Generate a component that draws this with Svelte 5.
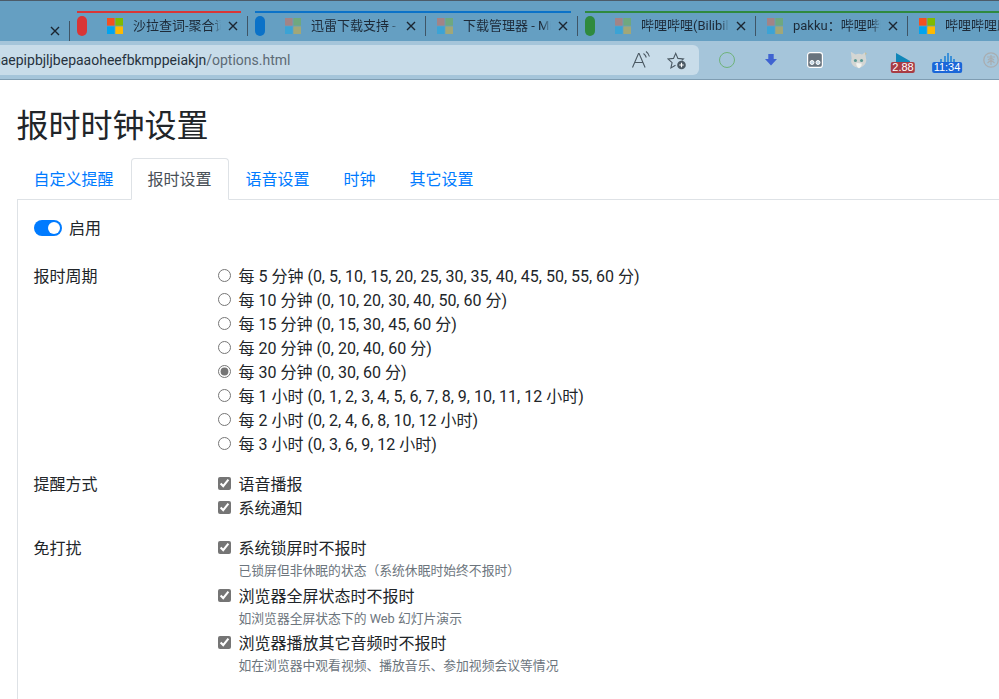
<script lang="ts">
	interface Tab {
		title: string;
		logo: 'bright' | 'faded';
	}
	interface Group {
		color?: string;
		tabs: Tab[];
	}

	const groups: Group[] = [
		{ color: '#d93636', tabs: [{ title: '沙拉查词-聚合词典划词翻译', logo: 'bright' }] },
		{
			color: '#0b72c8',
			tabs: [
				{ title: '迅雷下载支持 - Microsoft Edge', logo: 'faded' },
				{ title: '下载管理器 - Microsoft Edge', logo: 'faded' }
			]
		},
		{
			color: '#2f8a3f',
			tabs: [
				{ title: '哔哩哔哩(Bilibili)', logo: 'faded' },
				{ title: 'pakku：哔哩哔哩弹幕', logo: 'faded' },
				{ title: '哔哩哔哩助手', logo: 'bright' }
			]
		}
	];

	const periods = [
		'每 5 分钟 (0, 5, 10, 15, 20, 25, 30, 35, 40, 45, 50, 55, 60 分)',
		'每 10 分钟 (0, 10, 20, 30, 40, 50, 60 分)',
		'每 15 分钟 (0, 15, 30, 45, 60 分)',
		'每 20 分钟 (0, 20, 40, 60 分)',
		'每 30 分钟 (0, 30, 60 分)',
		'每 1 小时 (0, 1, 2, 3, 4, 5, 6, 7, 8, 9, 10, 11, 12 小时)',
		'每 2 小时 (0, 2, 4, 6, 8, 10, 12 小时)',
		'每 3 小时 (0, 3, 6, 9, 12 小时)'
	];

	const quiet = [
		{ label: '系统锁屏时不报时', hint: '已锁屏但非休眠的状态（系统休眠时始终不报时）' },
		{ label: '浏览器全屏状态时不报时', hint: '如浏览器全屏状态下的 Web 幻灯片演示' },
		{ label: '浏览器播放其它音频时不报时', hint: '如在浏览器中观看视频、播放音乐、参加视频会议等情况' }
	];

	const navItems = ['自定义提醒', '报时设置', '语音设置', '时钟', '其它设置'];
	let activeNav = $state('报时设置');
	let period = $state(4);
</script>

{#snippet logo(kind: string)}
	<svg class="favicon" viewBox="0 0 16 16" aria-hidden="true">
		{#if kind === 'bright'}
			<rect width="7.6" height="7.6" fill="#f25022" />
			<rect x="8.4" width="7.6" height="7.6" fill="#7fba00" />
			<rect y="8.4" width="7.6" height="7.6" fill="#00a4ef" />
			<rect x="8.4" y="8.4" width="7.6" height="7.6" fill="#ffb900" />
		{:else}
			<rect width="7.6" height="7.6" fill="#a28487" />
			<rect x="8.4" width="7.6" height="7.6" fill="#6fa87f" />
			<rect y="8.4" width="7.6" height="7.6" fill="#3ba3d5" />
			<rect x="8.4" y="8.4" width="7.6" height="7.6" fill="#a1a778" />
		{/if}
	</svg>
{/snippet}

{#snippet tabItem(tab: Tab, grouped: boolean)}
	<div class="tab" class:grouped>
		{@render logo(tab.logo)}
		<span class="tab-title">{tab.title}</span>
		<svg class="close" viewBox="0 0 10 10" aria-hidden="true">
			<path d="M1 1l8 8M9 1l-8 8" />
		</svg>
	</div>
{/snippet}

<div class="browser">
	<div class="tabstrip">
		<div class="tab first">
			<svg class="close" viewBox="0 0 10 10" aria-hidden="true">
				<path d="M1 1l8 8M9 1l-8 8" />
			</svg>
		</div>
		{#each groups as group}
			<div class="group" style="--group: {group.color}">
				{#each group.tabs as tab, i}
					{#if i === 0}
						<span class="pill"></span>
					{/if}
					{@render tabItem(tab, i === 0)}
				{/each}
			</div>
		{/each}
	</div>

	<div class="toolbar">
		<div class="address">
			<span class="url">haepipbjljbepaaoheefbkmppeiakjn<span class="path">/options.html</span></span>
			<svg class="addr-icon" viewBox="0 0 20 20" aria-hidden="true">
				<path d="M1.500 17.500 7.500 3.500h.6l6 14M3.600 12.500h8.400" />
				<path d="M12.500 3.500c1.400 1 2.400 2.400 2.800 4M15 1.500c1.800 1.300 3 3 3.400 5" />
			</svg>
			<svg class="addr-icon star" viewBox="0 0 20 20" aria-hidden="true">
				<path d="M9.500 10.800 M8.500 15.300 3.900 18l1.200-5.400L1 8.900l5.500-.5L8.700 3.300l2.200 5.100 5.500.5-1.600 1.500" />
				<circle class="plus-bg" cx="14.500" cy="15" r="4.300" />
				<path class="plus" d="M14.500 12.800v4.400M12.300 15h4.400" />
			</svg>
		</div>
		<div class="extensions">
			<span class="ext ring"></span>
			<svg class="ext" viewBox="0 0 16 16" aria-hidden="true">
				<path d="M5.300 2h5.400v5H14l-6 6.400L2 7h3.300z" fill="#3f63d1" />
			</svg>
			<svg class="ext" viewBox="0 0 16 16" aria-hidden="true">
				<rect x=".6" y=".6" width="14.800" height="14.800" rx="2.500" fill="#68747e" stroke="#fff" stroke-width="1.200" />
				<circle cx="5" cy="10.500" r="2" fill="#c7dbe8" stroke="#fff" />
				<circle cx="11" cy="10.500" r="2" fill="#c7dbe8" stroke="#fff" />
			</svg>
			<svg class="ext cat" viewBox="0 0 18 18" aria-hidden="true">
				<path d="M1 1l4.500 2.500c2.500-.8 4.500-.8 6.500 0L15 1.500l.8 5.500c1 3.500-.5 6.500-3 8L9 17l-4-1.500C2 14 .5 11 1.800 7.500z" fill="#d4d6d3" />
				<path d="M15 1.500l1.500 1-1 2z" fill="#cdbd8a" />
				<path d="M9 17c-2-1-3-3-2.500-5l5 .5c.4 2-.5 3.500-2.500 4.500z" fill="#f4f4f0" />
				<circle cx="5.500" cy="9.500" r="1.500" fill="#5b9a96" />
				<circle cx="11.500" cy="9.500" r="1.500" fill="#5b9a96" />
			</svg>
			<div class="ext-badged">
				<svg class="badge-art" viewBox="0 0 16 10" aria-hidden="true">
					<path d="M1 0l14 8v2H1z" fill="#0f86b8" />
				</svg>
				<span class="badge red">2.88</span>
			</div>
			<div class="ext-badged">
				<svg class="badge-art" viewBox="0 0 16 10" aria-hidden="true">
					<path d="M1 6h2v4H1zM5 3h2v7H5zM8 0h2v10H8zM11 3h2v7h-2zM14 6h2v4h-2z" fill="#3b90d8" />
				</svg>
				<span class="badge blue">11:34</span>
			</div>
			<svg class="ext last" viewBox="0 0 16 16" aria-hidden="true">
				<circle cx="8" cy="8" r="7.200" fill="none" stroke="#a9adb0" stroke-width="1.300" />
				<path d="M4 5h8M8 3v10M5 8l3-2 3 2M4.500 11l3.500-3 3.500 3" fill="none" stroke="#a9adb0" stroke-width="1.200" />
			</svg>
		</div>
	</div>
</div>

<main class="page">
	<h1>报时时钟设置</h1>
	<ul class="nav">
		{#each navItems as item}
			<li>
				<button class="nav-link" class:active={item === activeNav} onclick={() => (activeNav = item)}>
					{item}
				</button>
			</li>
		{/each}
	</ul>

	<section class="panel">
		<label class="switch-row">
			<span class="switch"></span>
			<span class="line">启用</span>
		</label>

		<div class="row">
			<div class="line">报时周期</div>
			<div>
				{#each periods as text, i}
					<label class="choice">
						<input type="radio" name="period" value={i} bind:group={period} />
						<span class="line">{text}</span>
					</label>
				{/each}
			</div>
		</div>

		<div class="row">
			<div class="line">提醒方式</div>
			<div>
				<label class="choice"><input type="checkbox" checked /><span class="line">语音播报</span></label>
				<label class="choice"><input type="checkbox" checked /><span class="line">系统通知</span></label>
			</div>
		</div>

		<div class="row">
			<div class="line">免打扰</div>
			<div>
				{#each quiet as item}
					<label class="choice"><input type="checkbox" checked /><span class="line">{item.label}</span></label>
					<small class="hint">{item.hint}</small>
				{/each}
			</div>
		</div>
	</section>
</main>

<style>
	:global(body) {
		margin: 0;
		overflow: hidden;
		background: #fff;
		color: #212529;
		font-family: Roboto, 'Noto Sans CJK SC', sans-serif;
		font-size: 16px;
		line-height: 24px;
	}

	.browser {
		width: 999px;
		overflow: hidden;
		border-bottom: 1px solid #7f9db2;
	}

	.tabstrip {
		display: flex;
		height: 40px;
		border-top: 1px solid #4c5b68;
		background: #659fc2;
		font-size: 13px;
		color: #1d2a38;
	}

	.group {
		display: flex;
		align-items: center;
		position: relative;
		padding-left: 7px;
	}

	.group::before {
		content: '';
		position: absolute;
		top: 10px;
		left: 7px;
		right: 7px;
		height: 2px;
		background: var(--group);
	}

	.pill {
		flex: none;
		width: 10px;
		height: 20px;
		margin-top: 10px;
		border-radius: 5px;
		background: var(--group);
	}

	.tab {
		flex: none;
		box-sizing: border-box;
		display: flex;
		align-items: center;
		gap: 10px;
		width: 152px;
		height: 20px;
		margin-top: 10px;
		padding: 0 9px 0 11px;
		border-right: 1px solid #3f5566;
		white-space: nowrap;
	}

	.tab.grouped {
		width: 161px;
		padding-left: 20px;
	}

	.tab.first {
		width: 70px;
		margin-top: 20px;
		justify-content: flex-end;
	}

	.favicon {
		flex: none;
		width: 16px;
		height: 16px;
	}

	.tab-title {
		flex: 1;
		min-width: 0;
		overflow: hidden;
		-webkit-mask-image: linear-gradient(to right, #000 90%, transparent);
		mask-image: linear-gradient(to right, #000 90%, transparent);
	}

	.close {
		flex: none;
		width: 10px;
		height: 10px;
		margin-left: -3px;
		fill: none;
		stroke: #1b2530;
		stroke-width: 1.400;
	}

	.toolbar {
		display: flex;
		align-items: center;
		height: 38px;
		background: #a5c5da;
	}

	.address {
		flex: none;
		box-sizing: border-box;
		display: flex;
		align-items: center;
		gap: 16px;
		width: 699px;
		height: 30px;
		padding-right: 12px;
		overflow: hidden;
		border-radius: 0 6px 6px 0;
		background: #c8dce9;
		font-size: 14px;
	}

	.url {
		flex: 1;
		margin-left: -7px;
		white-space: nowrap;
		color: #26323d;
	}

	.path {
		color: #5c6a75;
	}

	.addr-icon {
		flex: none;
		width: 20px;
		height: 20px;
		fill: none;
		stroke: #4b5963;
		stroke-width: 1.100;
	}

	.plus-bg {
		fill: #4b5963;
		stroke: none;
	}

	.plus {
		stroke: #fff;
		stroke-width: 1.200;
	}

	.extensions {
		display: flex;
		align-items: center;
		gap: 28px;
		margin-left: 20px;
	}

	.ext {
		flex: none;
		width: 16px;
		height: 16px;
	}

	.cat {
		transform: scale(1.150);
	}

	.ring {
		box-sizing: border-box;
		border: 1.500px solid #6fb37a;
		border-radius: 50%;
	}

	.ext-badged {
		position: relative;
		flex: none;
		width: 16px;
		height: 20px;
	}

	.badge-art {
		position: absolute;
		top: 3px;
		left: 0;
		width: 16px;
		height: 10px;
	}

	.badge {
		position: absolute;
		top: 12px;
		left: 50%;
		transform: translateX(-50%);
		padding: 0 1.500px;
		border-radius: 2px;
		font-family: 'Liberation Sans', sans-serif;
		font-size: 11px;
		line-height: 11px;
		color: #fff;
	}

	.red {
		background: #a83c44;
	}

	.blue {
		background: #1a66d8;
	}

	.page {
		padding-left: 16.500px;
	}

	h1 {
		margin: 0;
		padding: 26px 0 12px;
		font-size: 32px;
		font-weight: 400;
		line-height: 40px;
	}

	.nav {
		display: flex;
		margin: 0;
		padding: 0;
		list-style: none;
	}

	.nav-link {
		display: block;
		height: 42px;
		margin-bottom: -1px;
		padding: 9px 16px 7px;
		border: 1px solid transparent;
		border-radius: 4px 4px 0 0;
		background: none;
		color: #007bff;
		font: inherit;
		cursor: pointer;
	}

	.nav-link.active {
		position: relative;
		border-color: #dee2e6 #dee2e6 #fff;
		background: #fff;
		color: #495057;
	}

	.panel {
		margin-right: -20px;
		padding: 16px;
		border: 1px solid #dee2e6;
		border-bottom: 0;
	}

	.line {
		display: block;
		height: 24px;
		line-height: 26px;
	}

	.switch-row {
		display: flex;
		align-items: center;
		gap: 7.500px;
		margin-bottom: 24px;
	}

	.switch {
		position: relative;
		width: 28px;
		height: 16px;
		border-radius: 8px;
		background: #007bff;
	}

	.switch::after {
		content: '';
		position: absolute;
		top: 2px;
		right: 2px;
		width: 12px;
		height: 12px;
		border-radius: 50%;
		background: #fff;
	}

	.row {
		display: grid;
		grid-template-columns: 184.500px 1fr;
		margin-bottom: 16px;
	}

	.choice {
		display: flex;
		align-items: center;
		gap: 7.500px;
		white-space: nowrap;
	}

	.choice input {
		flex: none;
		width: 13px;
		height: 13px;
		margin: 0 0 1px;
		accent-color: #757575;
	}

	.hint {
		display: block;
		height: 19.600px;
		margin-bottom: 4px;
		padding-left: 20.500px;
		font-size: 12.800px;
		line-height: 21.600px;
		color: #6c757d;
	}
</style>
